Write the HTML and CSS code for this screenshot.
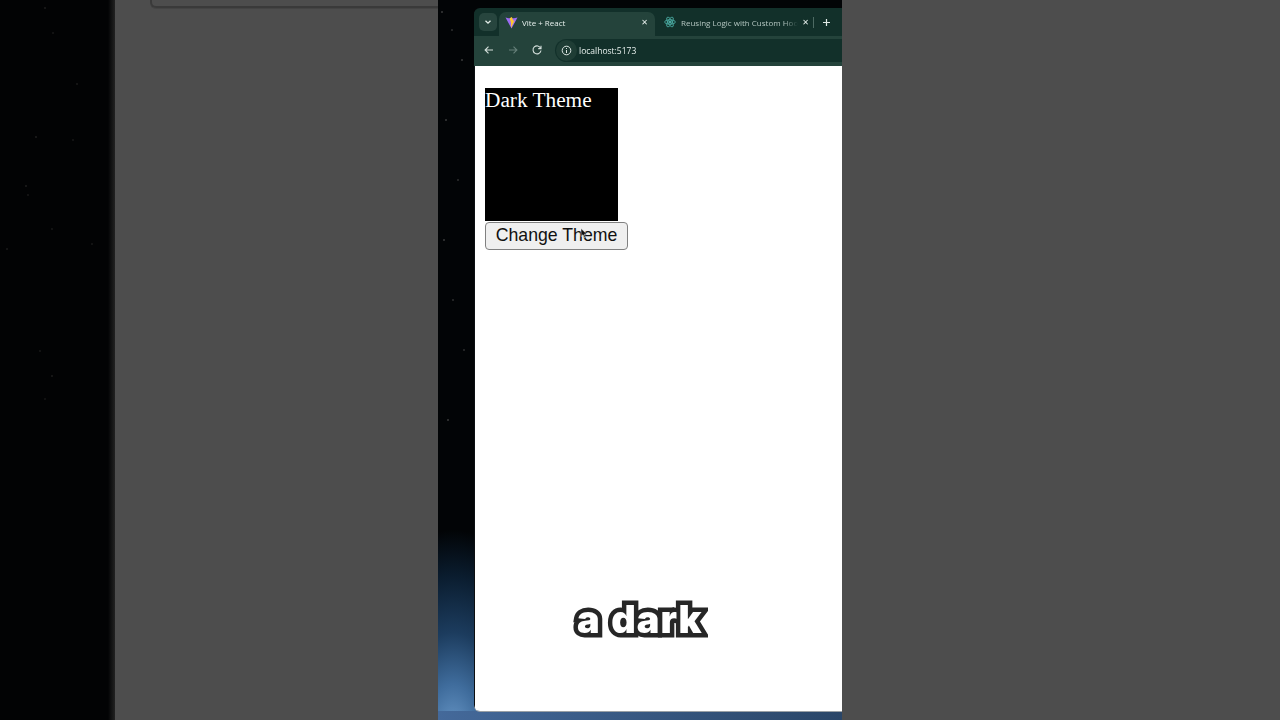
FILE: index.html
```html
<!DOCTYPE html>
<html lang="en">

<head>
    <meta charset="UTF-8">
    <meta name="viewport" content="width=device-width, initial-scale=1.0">
    <title>Vite + React</title>
    <link rel="stylesheet" href="styles.css">
</head>

<body>
    <div class="stars-side"></div>

    <div class="gray-left">
        <div class="old-box"></div>
    </div>

    <div class="video">
        <div class="browser">
            <div class="tabstrip">
                <div class="tab-menu">
                    <svg width="8" height="8" viewBox="0 0 8 8"><path d="M1.5 2.8 4 5.2 6.5 2.8" fill="none" stroke="#e4eeea" stroke-width="1.3"/></svg>
                </div>
                <div class="tab tab-active">
                    <svg class="favicon" width="13" height="13" viewBox="0 0 13 13">
                        <path d="M.5 1.5 6.5 12.5 12.5 1.5 9 2.2 6.5 2.2 3.5 2.2Z" fill="#9d6bf5"/>
                        <path d="M6.8 1 4.7 2.2 6 7 6 12 9.5 4.5 8.4 4.7Z" fill="#fbc531"/>
                    </svg>
                    <span class="tab-title">Vite + React</span>
                    <span class="tab-x">✕</span>
                </div>
                <div class="tab">
                    <svg class="favicon" width="12" height="12" viewBox="0 0 12 12" fill="none" stroke="#4fb5ac" stroke-width=".8">
                        <circle cx="6" cy="6" r="1.1" fill="#4fb5ac"/>
                        <ellipse cx="6" cy="6" rx="5.4" ry="2.2"/>
                        <ellipse cx="6" cy="6" rx="5.4" ry="2.2" transform="rotate(60 6 6)"/>
                        <ellipse cx="6" cy="6" rx="5.4" ry="2.2" transform="rotate(120 6 6)"/>
                    </svg>
                    <span class="tab-title tab-fade">Reusing Logic with Custom Hoo</span>
                    <span class="tab-x">✕</span>
                </div>
                <div class="tab-sep"></div>
                <svg class="tab-plus" width="9" height="9" viewBox="0 0 9 9"><path d="M4.5 1v7M1 4.5h7" stroke="#dfe9e5" stroke-width="1.2"/></svg>
            </div>

            <div class="toolbar">
                <svg width="12" height="12" viewBox="0 0 12 12" fill="none" stroke="#d5e0dc" stroke-width="1.1"><path d="M10 6H2.2M5.5 2.6 2.1 6l3.4 3.4"/></svg>
                <svg width="12" height="12" viewBox="0 0 12 12" fill="none" stroke="#66807a" stroke-width="1.1"><path d="M2 6h7.8M6.5 2.6 9.9 6 6.5 9.4"/></svg>
                <svg width="12" height="12" viewBox="0 0 12 12" fill="none" stroke="#d5e0dc" stroke-width="1.1"><path d="M9.7 4.2A4 4 0 1 0 10 6.5"/><path d="M10 1.8v2.8H7.2"/></svg>
                <div class="omnibox">
                    <div class="info-chip">
                        <svg width="11" height="11" viewBox="0 0 11 11" fill="none" stroke="#dce6e2"><circle cx="5.5" cy="5.5" r="4.3"/><path d="M5.5 5v3M5.5 3v1"/></svg>
                    </div>
                    <span class="url">localhost:5173</span>
                </div>
            </div>

            <div class="page">
                <div class="theme-box">Dark Theme</div>
                <button class="theme-btn">Change Theme</button>
                <svg class="cursor" width="8" height="11" viewBox="0 0 8 11"><path d="M1 .5v8l2-1.8 1.3 3 1.2-.5-1.2-3H7Z" fill="#111" stroke="#fff" stroke-width=".5"/></svg>
            </div>
        </div>
        <div class="caption">a dark</div>
    </div>

    <div class="gray-right"></div>
</body>

</html>
```

FILE: styles.css
```css
* {
    box-sizing: border-box;
}

body {
    margin: 0;
    height: 720px;
    overflow: hidden;
    display: grid;
    grid-template-columns: 115px 323px 404px 1fr;
    background-color: #000;
}

.stars-side {
    background-color: #020304;
    background-image:
        radial-gradient(circle at 45px 8px, #1a1a1a .5px, transparent 1.5px),
        radial-gradient(circle at 53px 33px, #161616 .5px, transparent 1.5px),
        radial-gradient(circle at 77px 84px, #181818 .5px, transparent 1.5px),
        radial-gradient(circle at 36px 137px, #1c1c1c .5px, transparent 1.5px),
        radial-gradient(circle at 26px 186px, #1c1c1c .5px, transparent 1.5px),
        radial-gradient(circle at 28px 195px, #161616 .5px, transparent 1.5px),
        radial-gradient(circle at 73px 140px, #161616 .5px, transparent 1.5px),
        radial-gradient(circle at 52px 229px, #161616 .5px, transparent 1.5px),
        radial-gradient(circle at 7px 249px, #181818 .5px, transparent 1.5px),
        radial-gradient(circle at 92px 244px, #161616 .5px, transparent 1.5px),
        radial-gradient(circle at 40px 351px, #161616 .5px, transparent 1.5px),
        radial-gradient(circle at 52px 376px, #1a1a1a .5px, transparent 1.5px),
        radial-gradient(circle at 45px 399px, #141414 .5px, transparent 1.5px),
        linear-gradient(to right, transparent 108px, #222 115px);
}

.gray-left {
    background-color: #4d4d4d;
    padding-left: 35px;
}

.old-box {
    height: 8px;
    border: 2px solid #3a3a3a;
    border-top: none;
    border-right: none;
    border-radius: 0 0 0 6px;
    box-shadow: 0 1px 0 #444;
}

.video {
    position: relative;
    padding: 8px 0 9px 36px;
    background-color: #020406;
    background-repeat: no-repeat;
    background-image:
        linear-gradient(to right, #44699a, #2a4668),
        radial-gradient(circle at 4px 12px, #555 .4px, transparent 1px),
        radial-gradient(circle at 14px 30px, #444 .4px, transparent 1px),
        radial-gradient(circle at 24px 60px, #555 .4px, transparent 1px),
        radial-gradient(circle at 8px 120px, #555 .4px, transparent 1px),
        radial-gradient(circle at 20px 180px, #444 .4px, transparent 1px),
        radial-gradient(circle at 6px 240px, #555 .4px, transparent 1px),
        radial-gradient(circle at 15px 300px, #444 .4px, transparent 1px),
        radial-gradient(circle at 26px 350px, #444 .4px, transparent 1px),
        radial-gradient(circle at 10px 420px, #555 .4px, transparent 1px),
        radial-gradient(ellipse 110px 205px at 15px 735px, #6c9bcb 0%, #3f6c9c 25%, #1c3c5e 50%, #0a1c2e 78%, transparent 100%);
    background-size: 100% 9px, auto, auto, auto, auto, auto, auto, auto, auto, auto, auto;
    background-position: left bottom, 0 0, 0 0, 0 0, 0 0, 0 0, 0 0, 0 0, 0 0, 0 0, 0 0;
}

.browser {
    height: 100%;
    display: flex;
    flex-direction: column;
    border-radius: 6px 0 0 6px;
    overflow: hidden;
    box-shadow: 0 1px 0 #9aa0a5;
}

.tabstrip {
    height: 28px;
    display: flex;
    align-items: flex-end;
    padding-left: 5px;
    background-color: #12302a;
    font-family: "Open Sans", sans-serif;
    filter: blur(.4px);
}

.tab-menu {
    width: 18px;
    height: 18px;
    margin-bottom: 5px;
    margin-right: 2px;
    border-radius: 5px;
    display: flex;
    align-items: center;
    justify-content: center;
    background-color: #27453e;
}

.tab {
    width: 156px;
    height: 24px;
    display: flex;
    align-items: center;
    padding: 0 7px 4px 6px;
    border-radius: 7px 7px 0 0;
    color: #b4c6c1;
    font-size: 8px;
}

.tab-active {
    background-color: #24433b;
    color: #e6efec;
}

.tab + .tab {
    margin-left: 3px;
    width: 154px;
    padding-right: 6px;
}

.tab + .tab .favicon {
    margin-right: 5px;
}

.favicon {
    flex-shrink: 0;
    margin-right: 4px;
}

.tab-title {
    flex: 1;
    white-space: nowrap;
}

.tab-fade {
    -webkit-mask-image: linear-gradient(to right, #000 88%, transparent 100%);
    mask-image: linear-gradient(to right, #000 88%, transparent 100%);
}

.tab-x {
    margin-left: 4px;
    font-size: 8px;
    font-family: "DejaVu Sans", sans-serif;
    color: #e6efec;
}

.tab-sep {
    width: 1px;
    height: 11px;
    margin-left: 1px;
    margin-bottom: 8px;
    background-color: #4d6a63;
}

.tab-plus {
    margin: 0 0 9px 8px;
}

.toolbar {
    height: 30px;
    display: flex;
    align-items: center;
    gap: 12px;
    padding: 0 0 2px 9px;
    background-color: #24433b;
    filter: blur(.4px);
}

.omnibox {
    flex: 1;
    height: 23px;
    display: flex;
    align-items: center;
    border-radius: 12px 0 0 12px;
    background-color: #12302a;
    font-family: "Open Sans", sans-serif;
}

.info-chip {
    width: 21px;
    height: 21px;
    margin-left: 1px;
    border-radius: 50%;
    display: flex;
    align-items: center;
    justify-content: center;
    background-color: #1f3d35;
}

.url {
    margin-left: 2px;
    font-size: 8.5px;
    color: #e6efec;
}

.page {
    flex: 1;
    position: relative;
    padding: 22px 10px;
    background-color: #fff;
    border-left: 1px solid #0c0f12;
}

.theme-box {
    width: 133px;
    height: 133px;
    background-color: #000;
    color: #fff;
    font-family: "Liberation Serif", serif;
    font-size: 21.3px;
    line-height: 25px;
}

.theme-btn {
    display: block;
    width: 143px;
    height: 28px;
    margin-top: 1px;
    padding: 0 0 2px;
    border: 1.5px solid #808080;
    border-radius: 4px;
    background-color: #efefef;
    color: #111;
    font-family: "Liberation Sans", sans-serif;
    font-size: 17.7px;
}

.cursor {
    position: absolute;
    left: 105px;
    top: 162px;
}

.caption {
    position: absolute;
    left: 139px;
    top: 595px;
    font-family: "Inter", sans-serif;
    font-weight: 900;
    font-size: 38px;
    letter-spacing: 1px;
    word-spacing: 2px;
    line-height: 48px;
    color: #fff;
    -webkit-text-stroke: 9px #262626;
    paint-order: stroke fill;
    filter: blur(.4px);
}

.gray-right {
    background-color: #4d4d4d;
}
```
